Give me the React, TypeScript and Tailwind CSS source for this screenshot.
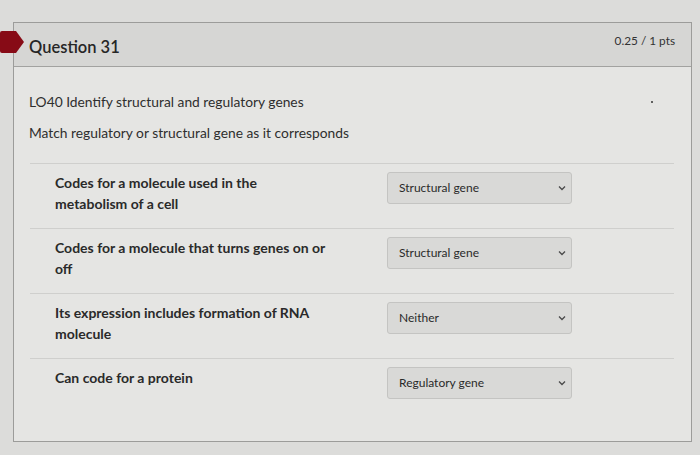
import React from "react";

const rows = [
  { label: ["Codes for a molecule used in the", "metabolism of a cell"], value: "Structural gene" },
  { label: ["Codes for a molecule that turns genes on or", "off"], value: "Structural gene" },
  { label: ["Its expression includes formation of RNA", "molecule"], value: "Neither" },
  { label: ["Can code for a protein"], value: "Regulatory gene" },
];

function Chevron() {
  return (
    <svg width="8" height="6" viewBox="0 0 8 6" className="shrink-0">
      <path d="M1 1.5 L4 4.5 L7 1.5" fill="none" stroke="#4a4a4a" strokeWidth="1.3" />
    </svg>
  );
}

export default function App() {
  return (
    <div
      className="relative flex h-[459px] w-[700px] flex-col overflow-hidden bg-[#dcdcda] text-[#2e2e2e]"
      style={{ fontFamily: "Lato, 'Open Sans', sans-serif" }}
    >
      {/* red question marker */}
      <svg className="absolute left-0 top-[31px]" width="25" height="23" viewBox="0 0 25 23">
        <path d="M2 0 H16 L24 11 L16 22 H2 Q0 22 0 20 V2 Q0 0 2 0 Z" fill="#870b16" />
      </svg>

      <div className="ml-[13px] mr-[8px] mt-[22px] h-[420px] border border-[#9c9c9a] bg-[#e5e5e3]">
        <div className="flex h-[44px] justify-between border-b border-[#a2a2a0] bg-[#d6d6d4] pl-[15px] pr-[16px]">
          <div className="pt-[13px] text-[16.5px] font-semibold leading-[22px] text-[#262626]">Question 31</div>
          <div className="pt-[11px] text-[11.8px] leading-[14px] text-[#333]">0.25 / 1 pts</div>
        </div>

        <div className="pl-[15px] pr-[38px] pt-[25px]">
          <div className="flex items-center justify-between text-[13.8px] leading-[20px]">
            <span>LO40 Identify structural and regulatory genes</span>
            <span className="h-[2px] w-[2px] rounded-full bg-[#333]" />
          </div>
          <div className="mt-[11px] text-[13.8px] leading-[20px]">Match regulatory or structural gene as it corresponds</div>

          <div className="ml-[1px] mr-[-21px] mt-[20px]">
            {rows.map((r, i) => (
              <div key={i} className="flex h-[65px] border-t border-[#cfcfcd] pl-[25px] pt-[8px]">
                <div className="w-[332px] text-[14px] font-bold leading-[21px] text-[#2a2a2a]">
                  {r.label.map((l, j) => (
                    <div key={j}>{l}</div>
                  ))}
                </div>
                <div className="flex h-[32px] w-[185px] items-center justify-between rounded-[3px] border border-[#c4c4c2] bg-[#d9d9d7] pl-[11px] pr-[5px] text-[12px] text-[#2a2a2a]">
                  <span>{r.value}</span>
                  <Chevron />
                </div>
              </div>
            ))}
          </div>
        </div>
      </div>

      <div className="flex-1" />
      <div className="h-[4px] bg-white" />
    </div>
  );
}
